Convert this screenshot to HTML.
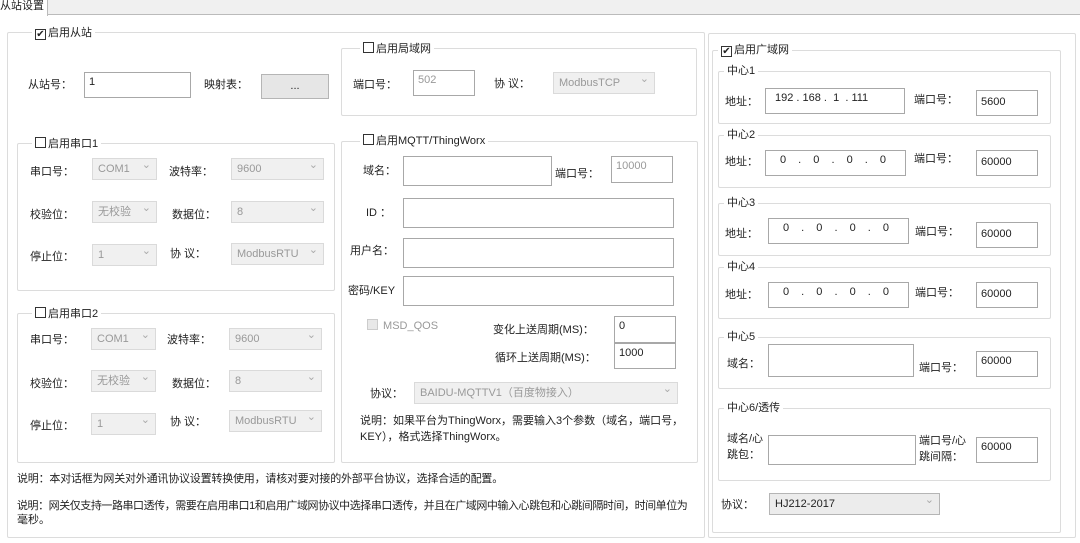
<!DOCTYPE html>
<html><head><meta charset="utf-8"><style>
*{box-sizing:border-box;margin:0;padding:0}
body{width:1080px;height:543px;background:#fff;position:relative;overflow:hidden;font-family:"Liberation Sans","Noto Sans CJK SC",sans-serif;font-size:11px;color:#222}
div,span{position:absolute;white-space:nowrap}
.g{border:1px solid #dcdcdc;border-radius:2px}
.lg{background:#fff;padding:0 3px;line-height:13px}
.cb{display:inline-block;position:relative;width:11px;height:11px;border:1px solid #333;background:#fff;vertical-align:-1px;margin-right:2px;font-size:10px;line-height:9px;text-align:center}
.in{border:1px solid #a8a8a8;background:#fff;padding:2px 4px;line-height:14px}
.sel{border:1px solid #dadada;background:#f0f0f0;color:#999;padding:0 5px;line-height:20px;height:22px}
.sel:after{content:"⌄";position:absolute;right:5px;top:-4px;color:#aaa;font-size:11px}
.t{line-height:14px}
.gray{color:#999}
</style></head><body>
<div style="left:0;top:0;width:1080px;height:15px;background:#f0f0f0;border-bottom:1px solid #bbb"></div>
<div style="left:0;top:0;width:48px;height:16px;background:#fff;border-right:1px solid #bbb;line-height:12px;padding-left:0">从站设置</div>

<!-- left outer -->
<div class="g" style="left:7px;top:32px;width:698px;height:506px"></div>
<div class="lg" style="left:32px;top:27px"><span class="cb" style="position:relative">✔</span>启用从站</div>
<div class="t" style="left:28px;top:78px">从站号：</div>
<div class="in" style="left:84px;top:72px;width:107px;height:26px">1</div>
<div class="t" style="left:204px;top:78px">映射表：</div>
<div style="left:261px;top:74px;width:68px;height:25px;border:1px solid #b5b5b5;background:#e6e6e6;text-align:center;line-height:22px">...</div>

<!-- LAN -->
<div class="g" style="left:341px;top:48px;width:356px;height:68px"></div>
<div class="lg" style="left:360px;top:42px"><span class="cb" style="position:relative"></span>启用局域网</div>
<div class="t" style="left:353px;top:78px">端口号：</div>
<div class="in gray" style="left:413px;top:70px;width:62px;height:26px">502</div>
<div class="t" style="left:494px;top:77px">协 议：</div>
<div class="sel" style="left:553px;top:72px;width:102px">ModbusTCP</div>

<!-- Serial1 -->
<div class="g" style="left:17px;top:143px;width:318px;height:148px"></div>
<div class="lg" style="left:32px;top:137px"><span class="cb" style="position:relative"></span>启用串口1</div>
<div class="t" style="left:30px;top:165px">串口号：</div><div class="sel" style="left:92px;top:158px;width:65px">COM1</div>
<div class="t" style="left:169px;top:165px">波特率：</div><div class="sel" style="left:231px;top:158px;width:93px">9600</div>
<div class="t" style="left:30px;top:208px">校验位：</div><div class="sel" style="left:92px;top:201px;width:65px">无校验</div>
<div class="t" style="left:172px;top:208px">数据位：</div><div class="sel" style="left:231px;top:201px;width:93px">8</div>
<div class="t" style="left:30px;top:250px">停止位：</div><div class="sel" style="left:92px;top:244px;width:65px">1</div>
<div class="t" style="left:170px;top:247px">协 议：</div><div class="sel" style="left:231px;top:243px;width:93px">ModbusRTU</div>

<!-- Serial2 -->
<div class="g" style="left:17px;top:313px;width:318px;height:150px"></div>
<div class="lg" style="left:32px;top:307px"><span class="cb" style="position:relative"></span>启用串口2</div>
<div class="t" style="left:30px;top:333px">串口号：</div><div class="sel" style="left:91px;top:328px;width:65px">COM1</div>
<div class="t" style="left:167px;top:333px">波特率：</div><div class="sel" style="left:229px;top:328px;width:93px">9600</div>
<div class="t" style="left:30px;top:377px">校验位：</div><div class="sel" style="left:91px;top:370px;width:65px">无校验</div>
<div class="t" style="left:172px;top:377px">数据位：</div><div class="sel" style="left:229px;top:370px;width:93px">8</div>
<div class="t" style="left:30px;top:419px">停止位：</div><div class="sel" style="left:91px;top:413px;width:65px">1</div>
<div class="t" style="left:170px;top:415px">协 议：</div><div class="sel" style="left:229px;top:410px;width:93px">ModbusRTU</div>

<!-- MQTT -->
<div class="g" style="left:341px;top:141px;width:357px;height:322px"></div>
<div class="lg" style="left:360px;top:134px"><span class="cb" style="position:relative"></span>启用MQTT/ThingWorx</div>
<div class="t" style="left:363px;top:164px">域名：</div><div class="in" style="left:403px;top:156px;width:149px;height:30px"></div>
<div class="t" style="left:555px;top:167px">端口号：</div><div class="in gray" style="left:611px;top:156px;width:62px;height:27px">10000</div>
<div class="t" style="left:366px;top:206px">ID ：</div><div class="in" style="left:403px;top:198px;width:271px;height:30px"></div>
<div class="t" style="left:350px;top:244px">用户名：</div><div class="in" style="left:403px;top:238px;width:271px;height:30px"></div>
<div class="t" style="left:348px;top:284px">密码/KEY</div><div class="in" style="left:403px;top:276px;width:271px;height:30px"></div>
<div class="t gray" style="left:367px;top:319px"><span class="cb" style="position:relative;border-color:#ccc;background:#e8e8e8"></span> MSD_QOS</div>
<div class="t" style="left:493px;top:323px">变化上送周期(MS)：</div><div class="in" style="left:614px;top:316px;width:62px;height:27px">0</div>
<div class="t" style="left:495px;top:351px">循环上送周期(MS)：</div><div class="in" style="left:614px;top:343px;width:62px;height:26px">1000</div>
<div class="t" style="left:370px;top:387px">协议：</div><div class="sel" style="left:414px;top:382px;width:264px">BAIDU-MQTTV1（百度物接入）</div>
<div class="t" style="left:360px;top:414px">说明：如果平台为ThingWorx，需要输入3个参数（域名，端口号，</div>
<div class="t" style="left:360px;top:430px">KEY），格式选择ThingWorx。</div>

<div class="t" style="left:17px;top:472px;letter-spacing:-0.2px">说明：本对话框为网关对外通讯协议设置转换使用，请核对要对接的外部平台协议，选择合适的配置。</div>
<div class="t" style="left:17px;top:499px;letter-spacing:-0.45px">说明：网关仅支持一路串口透传，需要在启用串口1和启用广域网协议中选择串口透传，并且在广域网中输入心跳包和心跳间隔时间，时间单位为</div>
<div class="t" style="left:17px;top:513px">毫秒。</div>

<!-- right -->
<div class="g" style="left:708px;top:33px;width:368px;height:505px"></div>
<div class="g" style="left:712px;top:50px;width:349px;height:483px"></div>
<div class="lg" style="left:718px;top:44px"><span class="cb" style="position:relative">✔</span>启用广域网</div>

<div class="g" style="left:718px;top:71px;width:333px;height:53px"></div><div class="lg" style="left:724px;top:65px">中心1</div>
<div class="t" style="left:725px;top:95px">地址：</div><div class="in" style="left:765px;top:88px;width:140px;height:26px;padding-left:9px">192 . 168 .&nbsp; 1&nbsp; . 111</div>
<div class="t" style="left:914px;top:93px">端口号：</div><div class="in" style="left:976px;top:90px;width:62px;height:26px;padding-top:4px">5600</div>

<div class="g" style="left:718px;top:135px;width:333px;height:53px"></div><div class="lg" style="left:724px;top:129px">中心2</div>
<div class="t" style="left:725px;top:155px">地址：</div><div class="in" style="left:765px;top:150px;width:141px;height:26px;padding-left:14px;word-spacing:9px">0 . 0 . 0 . 0</div>
<div class="t" style="left:914px;top:152px">端口号：</div><div class="in" style="left:976px;top:150px;width:62px;height:26px;padding-top:4px">60000</div>

<div class="g" style="left:718px;top:203px;width:333px;height:53px"></div><div class="lg" style="left:724px;top:197px">中心3</div>
<div class="t" style="left:725px;top:227px">地址：</div><div class="in" style="left:768px;top:218px;width:141px;height:26px;padding-left:14px;word-spacing:9px">0 . 0 . 0 . 0</div>
<div class="t" style="left:915px;top:225px">端口号：</div><div class="in" style="left:976px;top:222px;width:62px;height:26px;padding-top:4px">60000</div>

<div class="g" style="left:718px;top:267px;width:333px;height:52px"></div><div class="lg" style="left:724px;top:261px">中心4</div>
<div class="t" style="left:725px;top:288px">地址：</div><div class="in" style="left:768px;top:282px;width:141px;height:26px;padding-left:14px;word-spacing:9px">0 . 0 . 0 . 0</div>
<div class="t" style="left:915px;top:286px">端口号：</div><div class="in" style="left:976px;top:282px;width:62px;height:26px;padding-top:4px">60000</div>

<div class="g" style="left:718px;top:337px;width:333px;height:52px"></div><div class="lg" style="left:724px;top:331px">中心5</div>
<div class="t" style="left:727px;top:357px">域名：</div><div class="in" style="left:768px;top:344px;width:146px;height:33px"></div>
<div class="t" style="left:919px;top:361px">端口号：</div><div class="in" style="left:976px;top:351px;width:62px;height:26px">60000</div>

<div class="g" style="left:718px;top:408px;width:333px;height:73px"></div><div class="lg" style="left:724px;top:402px">中心6/透传</div>
<div class="t" style="left:727px;top:431px;line-height:16px;white-space:normal;width:40px">域名/心<br>跳包：</div><div class="in" style="left:768px;top:435px;width:148px;height:30px"></div>
<div class="t" style="left:919px;top:433px;line-height:16px">端口号/心<br>跳间隔：</div><div class="in" style="left:976px;top:437px;width:62px;height:26px">60000</div>

<div class="t" style="left:721px;top:498px">协议：</div>
<div class="sel" style="left:769px;top:493px;width:171px;color:#222;background:#ececec;border-color:#b5b5b5">HJ212-2017</div>
</body></html>
